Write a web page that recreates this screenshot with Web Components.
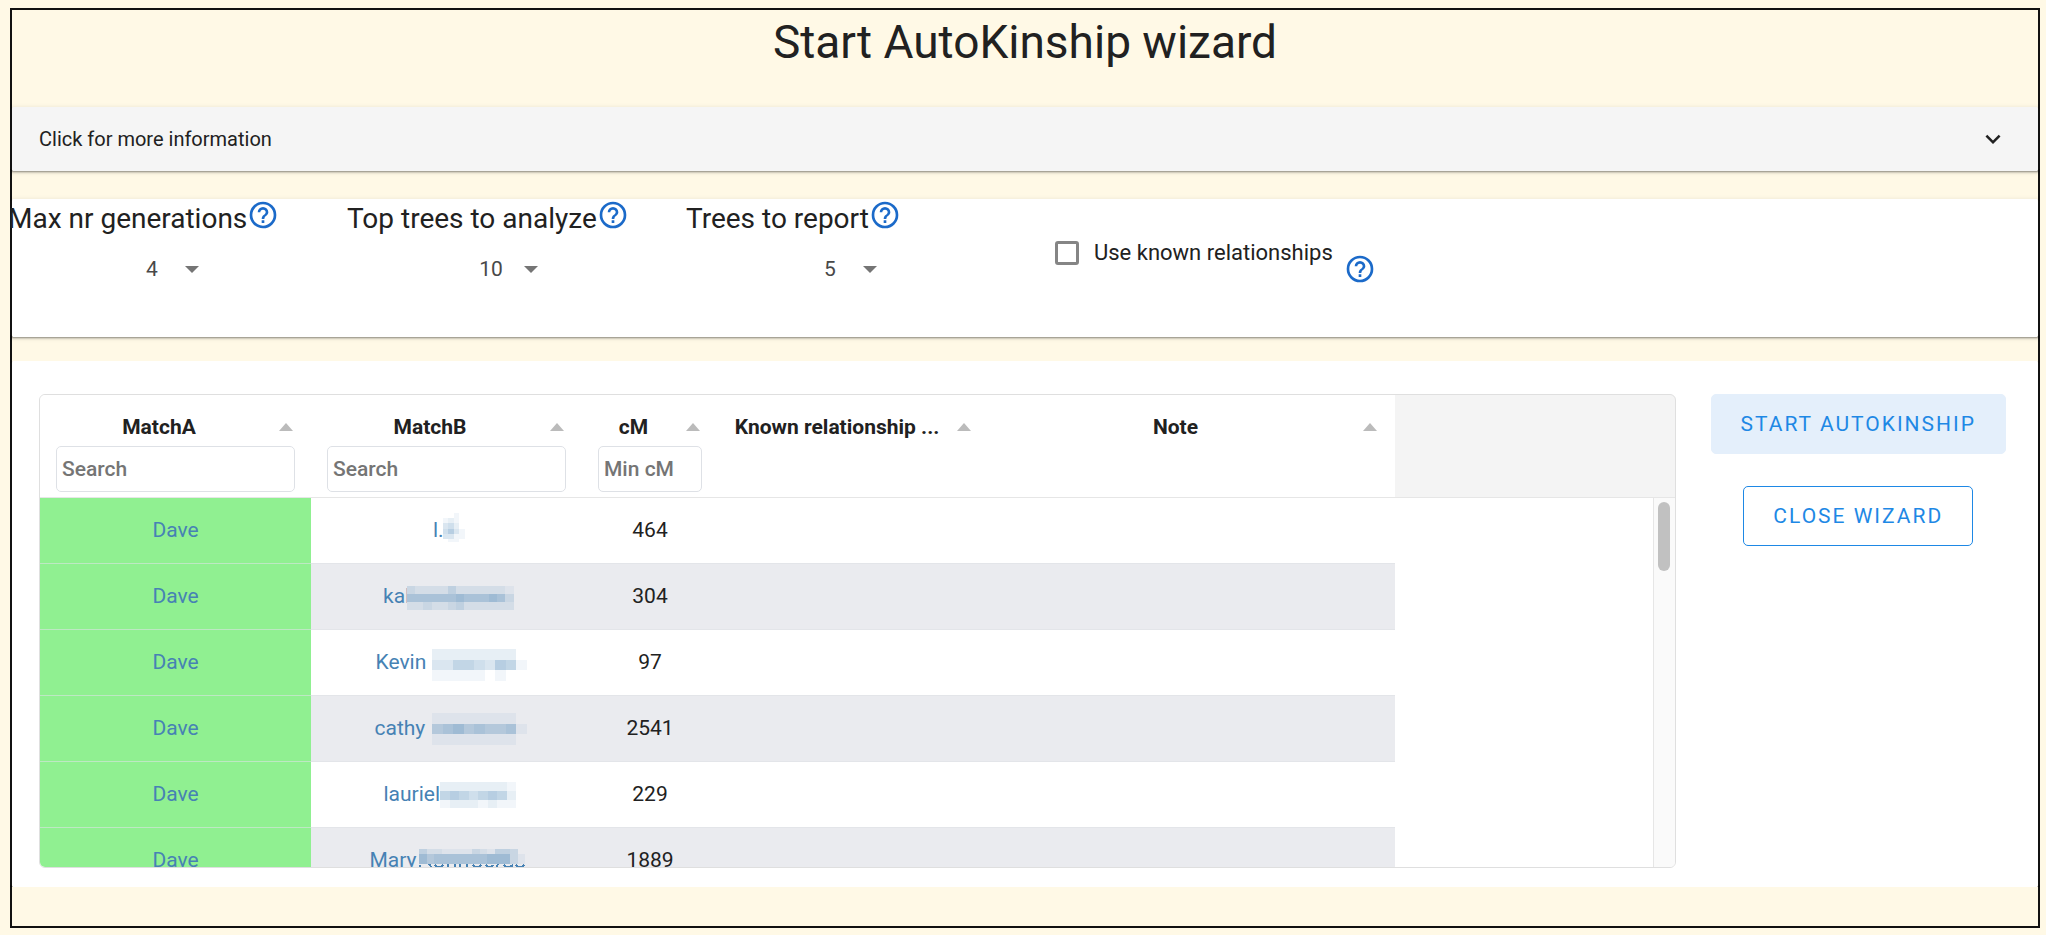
<!DOCTYPE html>
<html lang="en">
<head>
<meta charset="utf-8">
<title>Start AutoKinship wizard</title>
<style>
  html { background: #fff9e6; }
  body { margin: 8px 6px 7px 10px; font-family: Roboto, "Liberation Sans", sans-serif; color: #212121; }
</style>
</head>
<body>
<wizard-frame>
  <span slot="title">Start AutoKinship wizard</span>
  <info-panel>Click for more information</info-panel>
  <param-panel>
    <param-select label="Max nr generations" value="4" options="3,4,5,6"></param-select>
    <param-select label="Top trees to analyze" value="10" options="5,10,20"></param-select>
    <param-select label="Trees to report" value="5" options="1,5,10"></param-select>
    <param-check>Use known relationships</param-check>
  </param-panel>
  <match-panel>
    <match-table></match-table>
    <wizard-button slot="actions" kind="tonal">START AUTOKINSHIP</wizard-button>
    <wizard-button slot="actions" kind="outlined">CLOSE WIZARD</wizard-button>
  </match-panel>
</wizard-frame>

<script>
const define = (name, html, setup) => customElements.define(name, class extends HTMLElement {
  connectedCallback() {
    if (this.shadowRoot) return;
    const root = this.attachShadow({ mode: 'open' });
    const t = document.createElement('template');
    t.innerHTML = typeof html === 'function' ? html(this) : html;
    root.append(t.content.cloneNode(true));
    if (setup) setup(this, root);
  }
});

/* Cards reach past the frame line; only their shadow is drawn outside it. */
const card = `
  :host { display: block; box-sizing: border-box; margin: 0 -4px; border: 0 solid transparent; border-width: 0 4px;
    border-radius: 5px; background-clip: padding-box;
    box-shadow: 0 3px 1px -2px rgba(0,0,0,.2), 0 2px 2px rgba(0,0,0,.14), 0 1px 5px rgba(0,0,0,.12); }`;

define('wizard-frame', `
  <style>
    :host { display: block; border: 2px solid #111; padding-bottom: 39px; }
    h1 { margin: 0 0 33px; font-size: 46px; line-height: 64px; font-weight: 400; text-align: center; }
    main { display: flex; flex-direction: column; gap: 28px; }
  </style>
  <h1><slot name="title"></slot></h1>
  <main><slot></slot></main>`);

define('info-panel', `
  <style>${card}
    :host { background-color: #f5f5f5; }
    button { display: flex; width: 100%; height: 64px; align-items: center; justify-content: space-between;
      padding: 0 30px 0 27px; border: 0; background: none; font: 20px/24px Roboto, sans-serif; color: #212121; }
    svg { width: 30px; height: 30px; }
  </style>
  <button type="button" aria-expanded="false"><slot></slot>
    <svg viewBox="0 0 24 24" aria-hidden="true"><path fill="#212121" d="M7.41 8.58 12 13.17l4.59-4.59L18 10l-6 6-6-6z"/></svg>
  </button>`);

define('help-icon', `
  <style>
    :host { display: block; width: 32px; height: 32px; flex: none; }
    svg { display: block; width: 32px; height: 32px; }
  </style>
  <svg viewBox="0 0 24 24" role="img" aria-label="Help"><path fill="#1b6ac9" d="M11 18h2v-2h-2v2m1-16A10 10 0 0 0 2 12a10 10 0 0 0 10 10 10 10 0 0 0 10-10A10 10 0 0 0 12 2m0 18c-4.41 0-8-3.59-8-8s3.59-8 8-8 8 3.59 8 8-3.59 8-8 8m0-14a4 4 0 0 0-4 4h2a2 2 0 0 1 2-2 2 2 0 0 1 2 2c0 2-3 1.750-3 5h2c0-2.250 3-2.500 3-5a4 4 0 0 0-4-4z"/></svg>`);

define('param-panel', `
  <style>${card}
    :host { background-color: #fff; }
    div { display: grid; grid-template-columns: repeat(6, minmax(0, 1fr)); margin: 0 -4px; min-height: 138px; }
  </style>
  <div><slot></slot></div>`);

define('param-select', el => `
  <style>
    :host { display: block; }
    .head { display: flex; align-items: flex-start; }
    label { font-size: 28px; line-height: 40px; white-space: nowrap; }
    .field { position: relative; width: 80px; margin-left: 120px; margin-top: 10px; }
    select { appearance: none; width: 80px; height: 40px; padding: 0 32px 0 0; border: 0; background: none;
      font: 21px/40px Roboto, sans-serif; color: #484848; text-align: center; text-align-last: center; }
    svg { position: absolute; right: 9px; top: 17px; width: 14px; height: 7px; pointer-events: none; }
  </style>
  <div class="head"><label for="s">${el.getAttribute('label')}</label><help-icon></help-icon></div>
  <div class="field">
    <select id="s">${el.getAttribute('options').split(',').map(o =>
      `<option${o === el.getAttribute('value') ? ' selected' : ''}>${o}</option>`).join('')}</select>
    <svg viewBox="0 0 14 7" aria-hidden="true"><path fill="#757575" d="M0 0h14L7 7z"/></svg>
  </div>`);

define('param-check', `
  <style>
    :host { display: flex; align-items: flex-start; gap: 11px; padding: 38px 0 0 30px; }
    label { display: flex; align-items: center; gap: 15px; height: 32px; font-size: 22px; line-height: 32px; white-space: nowrap; }
    input { appearance: none; width: 24px; height: 24px; margin: 0; border: 3px solid #858585; border-radius: 3px; }
    help-icon { margin-top: 16px; }
  </style>
  <label><input type="checkbox"><slot></slot></label><help-icon></help-icon>`);

define('match-panel', `
  <style>${card}
    :host { background-color: #fff; clip-path: inset(0 -6px 0 -6px); margin-top: -4px; }
    .body { display: flex; gap: 35px; padding: 33px 32px 19px 27px; align-items: flex-start; }
    .table { flex: 1; min-width: 0; }
    .actions { display: flex; flex-direction: column; align-items: center; gap: 32px; }
  </style>
  <div class="body"><div class="table"><slot></slot></div><div class="actions"><slot name="actions"></slot></div></div>`);

define('wizard-button', `
  <style>
    :host { display: block; }
    button { height: 60px; padding: 0 29px; border: 1px solid #1e88e5; border-radius: 5px; background: #fff;
      font: 21px/24px Roboto, sans-serif; letter-spacing: 2px; color: #1e88e5; white-space: nowrap; }
    :host([kind="tonal"]) button { background: #e4effb; border-color: #e4effb; }
  </style>
  <button type="button"><slot></slot></button>`);

/* Pixelated cover for the private part of a name: bands of [y, height, opacity digits]. */
define('name-mosaic', el => {
  const m = el.mosaic;
  let cells = '';
  for (const [y, h, row] of m.bands) [...row].forEach((d, i) => {
    if (d !== '0') cells += `<rect x="${m.x + i * m.w}" y="${y}" width="${m.w}" height="${h}" fill="#4682b4" fill-opacity="${(d * 0.065).toFixed(2)}"/>`;
  });
  return `
  <style>
    :host { position: absolute; left: 0; top: 0; }
    svg { display: block; overflow: visible; }
  </style>
  <svg width="170" height="66" shape-rendering="crispEdges" aria-hidden="true">
    ${m.cover ? `<rect x="${m.x}" y="${m.cover[1]}" width="${m.cover[0]}" height="${m.cover[2]}" fill="${m.cover[3]}"/>` : ''}
    ${cells}${m.extra || ''}</svg>`;
});

const people = [
  { name: 'l.', width: 27, cm: 464, mosaic: { x: 10, w: 5.4, bands: [[15, 5, '00100'], [20, 5, '12100'], [25, 6, '34200'], [31, 5, '46310'], [36, 5, '33110'], [41, 3, '01100']] } },
  { name: 'kal', width: 127, cm: 304, mosaic: { x: 24, w: 8.2, cover: [10, 20, 28, '#eaebef'], bands: [[22, 8, '3222242222221'], [30, 8, '6666667666763'], [38, 8, '2232234222222']] } },
  { name: 'Kevin', width: 142, cm: 97, mosaic: { x: 56, w: 10.5, bands: [[19, 11, '222222220'], [30, 10, '335543651'], [40, 11, '111110100']] } },
  { name: 'cathy', width: 144, cm: 2541, mosaic: { x: 57, w: 10.5, bands: [[17, 11, '111111110'], [28, 10, '567565561'], [38, 11, '111111110']] } },
  { name: 'lauriel', width: 126, cm: 229, mosaic: { x: 56, w: 9.5, bands: [[20, 9, '22222221'], [29, 9, '56545652'], [38, 8, '12221211']] } },
  { name: 'Mary', width: 154, cm: 1889, mosaic: { x: 49, w: 7.6, bands: [[21, 5, '42211113214430'], [26, 10, '75666666677731']],
    extra: '<path stroke="#4682b4" stroke-width="2" fill="none" d="M50 37v3M59 36l3 4M65 37q4 4 8 0M78 36v4M85 36v4M90 36v4M97 36v4M103 37q4 4 8 0M116 37q4 4 7 0M128 36l-2 4M134 37q4 4 9 0M146 37q4 4 8 0"/>' } }
];

define('match-table', () => `
  <style>
    :host { display: block; }
    .box { display: flex; box-sizing: border-box; height: 474px; border: 1px solid #dfdfdf; border-radius: 6px; overflow: hidden;
      background: linear-gradient(#f4f4f4 102px, #e6e6e6 102px, #e6e6e6 103px, #fff 103px); }
    .view { flex: 1; min-width: 0; overflow: hidden; }
    table { width: 1355px; border-collapse: separate; border-spacing: 0; table-layout: fixed; background: #fff; }
    th { height: 102px; padding: 0 16px; border-bottom: 1px solid #e6e6e6; vertical-align: top; text-align: center;
      font-size: 21px; line-height: 24px; font-weight: 500; }
    .title { display: flex; align-items: center; gap: 17px; margin-top: 20px; height: 24px; font-weight: 700; padding-right: 2px; }
    .title span { flex: 1; white-space: nowrap; }
    .title svg { width: 14px; height: 8px; flex: none; }
    input { display: block; box-sizing: border-box; width: 100%; height: 46px; margin-top: 7px; padding: 0 5px;
      border: 1px solid #dee1e6; border-radius: 5px; font: 500 21px/24px Roboto, sans-serif; color: #212121; }
    input::placeholder { color: #757575; opacity: 1; }
    td { height: 63px; padding: 0 0 2px; border-bottom: 1px solid #e3e5e9; text-align: center; font-size: 21px; line-height: 24px; }
    tr:nth-child(even) td { background: #eaebef; }
    tbody tr td.a { background: #90f091; border-bottom-color: #bde8c3; }
    a { color: #4682b4; text-decoration: none; }
    .name { display: flex; align-items: center; position: relative; height: 63px; margin: 0 auto; white-space: nowrap; }
    .scroll { width: 21px; flex: none; margin-top: 103px; border-left: 1px solid #e6e6e6; background: #fafafa; padding-top: 4px; }
    .scroll i { display: block; width: 12px; height: 69px; margin: 0 auto; border-radius: 6px; background: #c1c1c1; }
  </style>
  <div class="box">
    <div class="view">
      <table>
        <colgroup><col style="width:271px"><col style="width:271px"><col style="width:136px"><col style="width:271px"><col style="width:406px"></colgroup>
        <thead><tr>${[['MatchA', 'Search'], ['MatchB', 'Search'], ['cM', 'Min cM'], ['Known relationship ...'], ['Note']].map(([t, p]) => `
          <th scope="col"><div class="title"><span>${t}</span><svg viewBox="0 0 14 8" aria-hidden="true"><path fill="#bbb" d="M7 0l7 8H0z"/></svg></div>
          ${p ? `<input type="text" placeholder="${p}" aria-label="${t}">` : ''}</th>`).join('')}</tr></thead>
        <tbody>${people.map(p => `
          <tr><td class="a"><a href="#">Dave</a></td>
          <td><div class="name" style="width:${p.width}px"><a href="#">${p.name}</a></div></td>
          <td>${p.cm}</td><td></td><td></td></tr>`).join('')}</tbody>
      </table>
    </div>
    <div class="scroll"><i></i></div>
  </div>`,
  (el, root) => root.querySelectorAll('.name').forEach((n, i) => {
    const m = document.createElement('name-mosaic');
    m.mosaic = people[i].mosaic;
    n.append(m);
  }));
</script>
</body>
</html>
